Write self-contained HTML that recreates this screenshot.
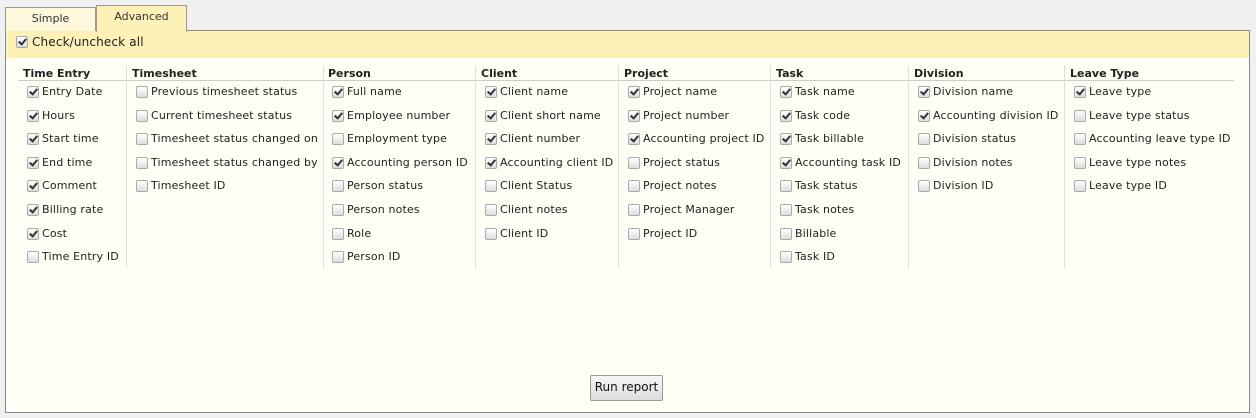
<!DOCTYPE html>
<html><head><style>
body{margin:0;width:1256px;height:418px;background:#f0f0f0;font-family:"DejaVu Sans",Verdana,sans-serif;font-size:11px;color:#222;position:relative;overflow:hidden}
.tab{position:absolute;border:1px solid #999;border-bottom:none;text-align:center;font-size:11px;color:#333}
.panel{position:absolute;left:5px;top:30px;width:1243px;height:381px;border:1px solid #888;background:#fffef4}
.band{position:absolute;left:0;top:0;width:1243px;height:27px;background:#fdf1b7}
.cb{position:absolute;width:10px;height:10px;border:1px solid #aaa;border-radius:2px;background:linear-gradient(#fff,#ddd)}
.cb.c::after{content:"";position:absolute;left:3px;top:0px;width:3px;height:6px;border:solid #333;border-width:0 2px 2px 0;transform:rotate(40deg)}
.lbl{position:absolute;white-space:nowrap;letter-spacing:0.15px}
.h{position:absolute;font-weight:bold;white-space:nowrap;top:67px}
.vl{position:absolute;top:66px;height:202px;width:1px;background:#ddd}
.hl{position:absolute;left:18px;top:80px;width:1216px;height:1px;background:#ccc}
.btn{position:absolute;left:590px;top:375px;width:71px;height:24px;border:1px solid #999;border-radius:2px;background:linear-gradient(#f6f6f6,#ddd);font-size:12px;text-align:center;line-height:23px;color:#111}
</style></head><body>
<div class="panel"><div class="band"></div></div>
<div class="tab" style="left:5px;top:7px;width:89px;height:23px;line-height:22px;background:#fdf8dc">Simple</div>
<div class="tab" style="left:96px;top:5px;width:89px;height:26px;line-height:22px;background:#fdf1b7;z-index:2">Advanced</div>
<div class="cb c" style="left:16px;top:36px"></div>
<div class="lbl" style="left:32px;top:35px;font-size:12px">Check/uncheck all</div>
<div class="hl"></div>
<div id="cols"></div>
<div class="btn">Run report</div>
<script>
var cols=[
[23,0,"Time Entry",[["Entry Date",1],["Hours",1],["Start time",1],["End time",1],["Comment",1],["Billing rate",1],["Cost",1],["Time Entry ID",0]]],
[132,126,"Timesheet",[["Previous timesheet status",0],["Current timesheet status",0],["Timesheet status changed on",0],["Timesheet status changed by",0],["Timesheet ID",0]]],
[328,323,"Person",[["Full name",1],["Employee number",1],["Employment type",0],["Accounting person ID",1],["Person status",0],["Person notes",0],["Role",0],["Person ID",0]]],
[481,475,"Client",[["Client name",1],["Client short name",1],["Client number",1],["Accounting client ID",1],["Client Status",0],["Client notes",0],["Client ID",0]]],
[624,618,"Project",[["Project name",1],["Project number",1],["Accounting project ID",1],["Project status",0],["Project notes",0],["Project Manager",0],["Project ID",0]]],
[776,770,"Task",[["Task name",1],["Task code",1],["Task billable",1],["Accounting task ID",1],["Task status",0],["Task notes",0],["Billable",0],["Task ID",0]]],
[914,908,"Division",[["Division name",1],["Accounting division ID",1],["Division status",0],["Division notes",0],["Division ID",0]]],
[1070,1064,"Leave Type",[["Leave type",1],["Leave type status",0],["Accounting leave type ID",0],["Leave type notes",0],["Leave type ID",0]]]];
var h="";
cols.forEach(function(c){
 if(c[1])h+='<div class="vl" style="left:'+c[1]+'px"></div>';
 h+='<div class="h" style="left:'+c[0]+'px">'+c[2]+'</div>';
 c[3].forEach(function(it,i){var y=86+i*23.6;
  h+='<div class="cb'+(it[1]?' c':'')+'" style="left:'+(c[0]+4)+'px;top:'+y+'px"></div>';
  h+='<div class="lbl" style="left:'+(c[0]+19)+'px;top:'+(y-1)+'px">'+it[0]+'</div>';});
});
document.getElementById("cols").innerHTML=h;
</script>
</body></html>
